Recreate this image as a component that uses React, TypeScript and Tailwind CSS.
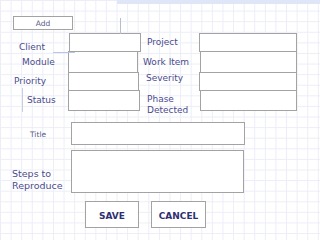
import React from 'react'

const box = 'border border-[#a3a3a3] bg-white'

type Row = {
  h: number
  left: string
  leftPad: string
  leftBox: string
  right: React.ReactNode
  rightPad: string
  rightBox: string
}

const rows: Row[] = [
  { h: 18, left: 'Client', leftPad: 'pl-[19px] pt-[8px]', leftBox: 'ml-[1px] w-[72px]', right: 'Project', rightPad: 'pl-[6px] pt-[3px]', rightBox: 'w-[98px]' },
  { h: 21, left: 'Module', leftPad: 'pl-[22px] pt-[5px]', leftBox: 'w-[70px]', right: 'Work Item', rightPad: 'pl-[5px] pt-[5px]', rightBox: 'w-[97px]' },
  { h: 18, left: 'Priority', leftPad: 'pl-[14px] pt-[3px]', leftBox: 'w-[71px]', right: 'Severity', rightPad: 'pl-[7px] pt-[0px]', rightBox: 'w-[98px]' },
  { h: 20, left: 'Status', leftPad: 'pl-[27px] pt-[4px]', leftBox: 'w-[72px]', right: <>Phase<br />Detected</>, rightPad: 'pl-[7px] pt-[3px]', rightBox: 'w-[97px]' },
]

export default function App() {
  return (
    <div className="relative w-[320px] h-[240px] overflow-hidden bg-white bg-[linear-gradient(to_right,#eceef7_1px,transparent_1px),linear-gradient(to_bottom,#eceef7_1px,transparent_1px)] bg-[size:10.6px_10.6px] font-['DejaVu_Sans',sans-serif] text-[9px] leading-[11px] text-[#4b4b8e]">
      {/* decorations */}
      <div className="absolute top-0 left-[117px] right-0 h-[4px] bg-[#dfe6f7]" />
      <div className="absolute top-[18px] left-[120px] w-px h-[16px] bg-[#b8bccc]" />
      <div className="absolute top-[52px] left-[53px] w-[22px] h-px bg-[#b9c4e6]" />
      <div className="absolute top-[88px] left-[22px] w-px h-[24px] bg-[#c8cde0]" />

      <div className="pt-[16px] pl-[13px]">
        <div className={`${box} w-[60px] h-[14px] flex items-center justify-center text-[7.5px] text-[#5a5a8a]`}>Add</div>
      </div>

      <div className="mt-[4px] flex flex-col">
        {rows.map((r, i) => (
          <div key={i} className="flex" style={{ height: r.h }}>
            <div className={`w-[68px] whitespace-nowrap ${r.leftPad}`}>{r.left}</div>
            <div className={`${box} ${r.leftBox} -mt-px h-[calc(100%+1px)]`} />
            <div className={`flex-1 whitespace-nowrap ${r.rightPad}`}>{r.right}</div>
            <div className={`${box} ${r.rightBox} mr-[23px] -mt-px h-[calc(100%+1px)]`} />
          </div>
        ))}
      </div>

      <div className="mt-[11px] flex h-[23px]">
        <div className="w-[71px] pl-[30px] pt-[7px] text-[7.5px] text-[#5a5a8a]">Title</div>
        <div className={`${box} w-[174px]`} />
      </div>

      <div className="mt-[5px] flex h-[43px]">
        <div className="w-[71px] pl-[12px] pt-[18px] text-[9.5px] leading-[12px]">Steps to<br />Reproduce</div>
        <div className={`${box} w-[173px]`} />
      </div>

      <div className="mt-[8px] flex gap-[12px] pl-[85px]">
        <button className={`${box} w-[54px] h-[27px] pt-[3px] font-bold text-[9px] text-[#2f2f72]`}>SAVE</button>
        <button className={`${box} w-[55px] h-[27px] pt-[3px] font-bold text-[9px] text-[#2f2f72]`}>CANCEL</button>
      </div>
    </div>
  )
}
